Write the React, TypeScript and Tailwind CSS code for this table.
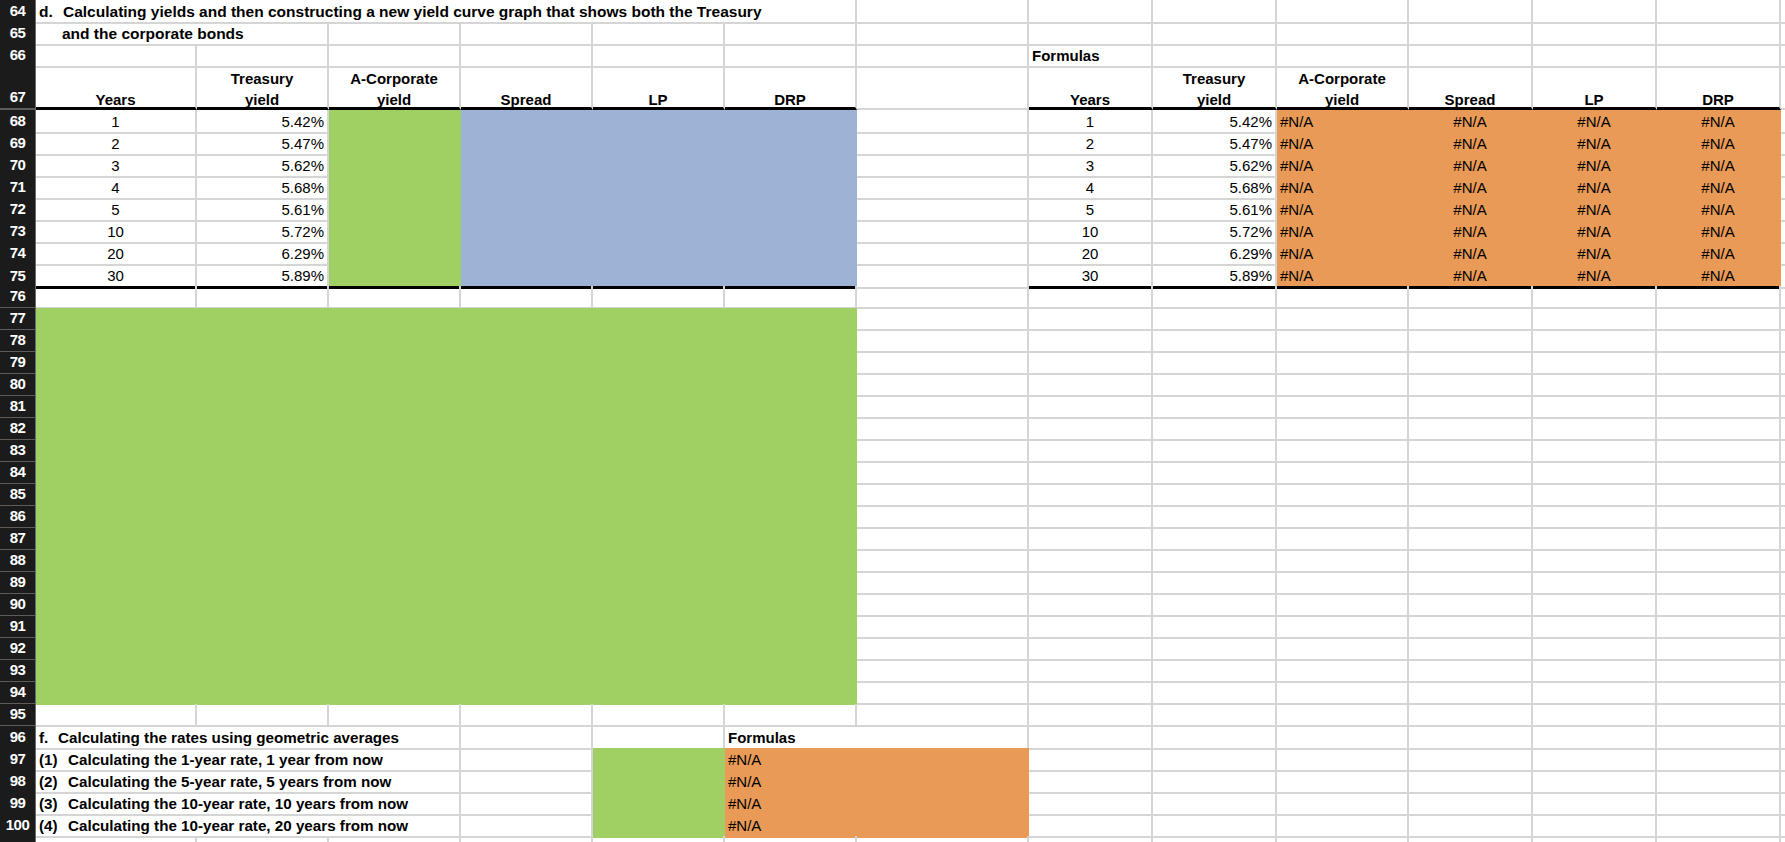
import type { ReactNode } from 'react';

type Fill = 'green' | 'blue' | 'orange';

interface Cell {
  span?: number;
  text?: ReactNode;
  align?: 'left' | 'center' | 'right';
  bold?: boolean;
  fill?: Fill;
  thick?: boolean;
  head?: boolean;
}

interface RowSpec {
  n: number;
  label?: boolean;
  tall?: boolean;
  cells: Cell[];
}

const TOTAL_COLS = 14;

const SPAN: Record<number, string> = {
  1: 'col-span-1',
  2: 'col-span-2',
  3: 'col-span-3',
  6: 'col-span-6',
};

const FILL_BG: Record<Fill, string> = {
  green: 'bg-[#a0cf64]',
  blue: 'bg-[#9db2d4]',
  orange: 'bg-[#e99a57]',
};

const empty = (count: number): Cell[] => Array.from({ length: count }, () => ({}));

const years = [1, 2, 3, 4, 5, 10, 20, 30];
const treasury = ['5.42%', '5.47%', '5.62%', '5.68%', '5.61%', '5.72%', '6.29%', '5.89%'];

const fRows = [
  ['(1)', 'Calculating the 1-year rate, 1 year from now'],
  ['(2)', 'Calculating the 5-year rate, 5 years from now'],
  ['(3)', 'Calculating the 10-year rate, 10 years from now'],
  ['(4)', 'Calculating the 10-year rate, 20 years from now'],
];

function headerCells(): Cell[] {
  return [
    { text: 'Years', head: true, thick: true },
    { text: <>Treasury<br />yield</>, head: true, thick: true },
    { text: <>A-Corporate<br />yield</>, head: true, thick: true },
    { text: 'Spread', head: true, thick: true },
    { text: 'LP', head: true, thick: true },
    { text: 'DRP', head: true, thick: true },
  ];
}

function buildRows(): RowSpec[] {
  const rows: RowSpec[] = [];

  rows.push({
    n: 64,
    cells: [
      {
        span: 6,
        bold: true,
        text: (
          <span className="text-[15.5px]">
            <span className="inline-block w-[24px]">d.</span>
            Calculating yields and then constructing a new yield curve graph that shows both the Treasury
          </span>
        ),
      },
    ],
  });
  rows.push({
    n: 65,
    cells: [{ span: 2, bold: true, text: <span className="pl-[23px] text-[15.5px]">and the corporate bonds</span> }],
  });
  rows.push({ n: 66, cells: [...empty(7), { text: 'Formulas', bold: true }] });
  rows.push({
    n: 67,
    tall: true,
    cells: [...headerCells(), {}, ...headerCells()],
  });

  years.forEach((y, i) => {
    const last = i === years.length - 1;
    rows.push({
      n: 68 + i,
      cells: [
        { text: y, align: 'center', thick: last },
        { text: treasury[i], align: 'right', thick: last },
        { fill: 'green', thick: last },
        { span: 3, fill: 'blue', thick: last },
        {},
        { text: y, align: 'center', thick: last },
        { text: treasury[i], align: 'right', thick: last },
        { text: '#N/A', fill: 'orange', thick: last },
        { text: '#N/A', fill: 'orange', align: 'center', thick: last },
        { text: '#N/A', fill: 'orange', align: 'center', thick: last },
        { text: '#N/A', fill: 'orange', align: 'center', thick: last },
      ],
    });
  });

  rows.push({ n: 76, cells: [] });
  for (let n = 77; n <= 94; n++) {
    rows.push({ n, cells: [{ span: 6, fill: 'green' }] });
  }
  rows.push({ n: 95, cells: [] });
  rows.push({
    n: 96,
    cells: [
      {
        span: 3,
        bold: true,
        text: (
          <span className="text-[15.2px]">
            <span className="inline-block w-[19px]">f.</span>
            Calculating the rates using geometric averages
          </span>
        ),
      },
      {},
      {},
      { span: 2, text: 'Formulas', bold: true },
    ],
  });
  fRows.forEach(([num, label], i) => {
    rows.push({
      n: 97 + i,
      cells: [
        {
          span: 3,
          bold: true,
          text: (
            <span className="text-[15.2px]">
              <span className="inline-block w-[29px]">{num}</span>
              {label}
            </span>
          ),
        },
        {},
        { fill: 'green' },
        { span: 2, fill: 'orange', text: '#N/A' },
      ],
    });
  });
  rows.push({ n: 101, label: false, cells: [] });

  return rows;
}

function SheetCell({ cell }: { cell: Cell }) {
  const span = cell.span ?? 1;
  const cls = [
    SPAN[span],
    'border-r-2 whitespace-nowrap px-[3px]',
    cell.fill ? 'border-r-transparent' : 'border-r-[#d5d5d5]',
    cell.thick ? 'border-b-[3px] border-b-black' : 'border-b-2',
    cell.thick ? '' : cell.fill ? 'border-b-transparent' : 'border-b-[#d5d5d5]',
    cell.fill ? FILL_BG[cell.fill] : '',
    cell.bold || cell.head ? 'font-bold' : '',
    cell.align === 'center' || cell.head ? 'text-center' : cell.align === 'right' ? 'text-right' : 'text-left',
    cell.head ? 'flex flex-col justify-end' : 'pt-[2px] leading-[20px]',
  ].join(' ');

  if (cell.head) {
    return (
      <div className={cls}>
        <div className="leading-[21px] -mb-[3px]">{cell.text}</div>
      </div>
    );
  }
  return <div className={cls}>{cell.text}</div>;
}

function SheetRow({ row }: { row: RowSpec }) {
  const used = row.cells.reduce((sum, c) => sum + (c.span ?? 1), 0);
  const cells = [...row.cells, ...empty(Math.max(0, TOTAL_COLS - used))];
  return (
    <div
      className={`grid grid-cols-[36px_161px_132px_132px_132px_132px_132px_172px_124px_124px_132px_124px_124px_124px_220px] ${
        row.tall ? 'h-[44px]' : 'h-[22px]'
      }`}
    >
      <div className="flex items-end justify-center bg-[#1b1b1b] text-white font-bold tracking-[-0.5px] border-b-2 border-b-[#5c5c5c] border-r border-r-[#6a6a6a]">
        {row.label !== false && <span className="leading-[20px] pb-[1px]">{row.n}</span>}
      </div>
      {cells.map((c, i) => (
        <SheetCell key={i} cell={c} />
      ))}
    </div>
  );
}

export default function App() {
  const rows = buildRows();
  return (
    <div className="w-[1785px] h-[842px] overflow-hidden bg-white text-black text-[15px] font-['Liberation_Sans',Arial,sans-serif]">
      {rows.map(r => (
        <SheetRow key={r.n} row={r} />
      ))}
    </div>
  );
}
